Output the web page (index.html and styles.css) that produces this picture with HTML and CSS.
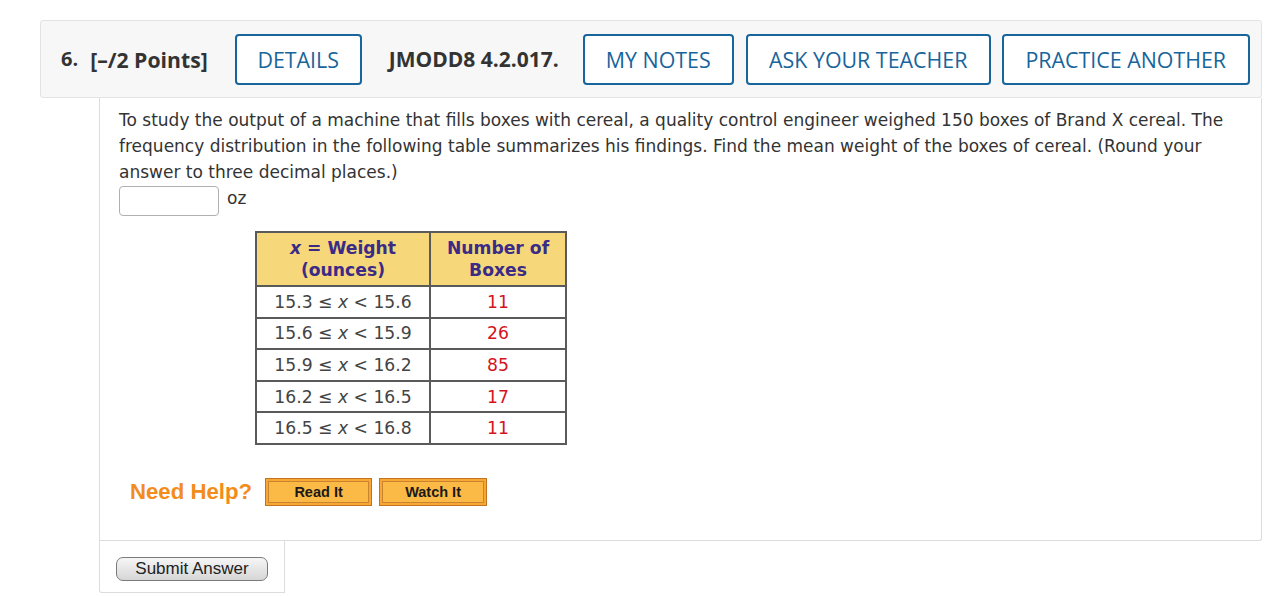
FILE: index.html
```html
<!DOCTYPE html>
<html>
<head>
<meta charset="utf-8">
<link rel="stylesheet" href="styles.css">
</head>
<body>
<div class="question">
  <div class="qhead">
    <span class="qnum">6.</span>
    <span class="qpoints">[–/2 Points]</span>
    <button class="hbtn btn-details">DETAILS</button>
    <span class="qcode">JMODD8 4.2.017.</span>
    <button class="hbtn btn-notes">MY NOTES</button>
    <button class="hbtn btn-ask">ASK YOUR TEACHER</button>
    <button class="hbtn btn-practice">PRACTICE ANOTHER</button>
  </div>
  <div class="qbody">
    <p class="prompt">To study the output of a machine that fills boxes with cereal, a quality control engineer weighed 150 boxes of Brand X cereal. The frequency distribution in the following table summarizes his findings. Find the mean weight of the boxes of cereal. (Round your answer to three decimal places.)</p>
    <div class="answer"><span class="inputbox"></span><span class="unit">oz</span></div>
    <table class="freq">
      <thead>
        <tr><th class="c1"><i>x</i> = Weight<br>(ounces)</th><th class="c2">Number of<br>Boxes</th></tr>
      </thead>
      <tbody>
        <tr><td>15.3 ≤ <i>x</i> &lt; 15.6</td><td class="num">11</td></tr>
        <tr><td>15.6 ≤ <i>x</i> &lt; 15.9</td><td class="num">26</td></tr>
        <tr><td>15.9 ≤ <i>x</i> &lt; 16.2</td><td class="num">85</td></tr>
        <tr><td>16.2 ≤ <i>x</i> &lt; 16.5</td><td class="num">17</td></tr>
        <tr><td>16.5 ≤ <i>x</i> &lt; 16.8</td><td class="num">11</td></tr>
      </tbody>
    </table>
    <div class="help">
      <span class="help-label">Need Help?</span>
      <button class="obtn">Read It</button>
      <button class="obtn">Watch It</button>
    </div>
  </div>
  <div class="submit-wrap">
    <button class="submit">Submit Answer</button>
  </div>
</div>
</body>
</html>
```
FILE: styles.css
```css
html, body {
  margin: 0;
  padding: 0;
  background: #ffffff;
}
.question {
  padding: 20px 22px 0 40px;
}
.qhead {
  display: flex;
  align-items: center;
  height: 76px;
  background: #f7f7f7;
  border: 1px solid #e3e3e3;
  border-radius: 3px;
  padding-left: 20px;
  font-family: "Open Sans", sans-serif;
}
.qnum {
  font-weight: 700;
  font-size: 20px;
  color: #333;
  margin-right: 12px;
  position: relative;
  top: -1px;
}
.qpoints {
  font-weight: 700;
  font-size: 21.2px;
  color: #333;
  margin-right: 27px;
}
.qcode {
  font-weight: 700;
  font-size: 21px;
  color: #333;
  margin: 0 24px 0 27px;
}
.hbtn {
  height: 51px;
  box-sizing: border-box;
  border: 2px solid #17659b;
  border-radius: 4px;
  background: #fff;
  color: #17659b;
  font-family: "Open Sans", sans-serif;
  font-size: 21.4px;
  padding: 0;
  flex: none;
}
.btn-details { width: 127px; }
.btn-notes { width: 151px; margin-right: 12px; }
.btn-ask { width: 245px; margin-right: 11px; }
.btn-practice { width: 248px; }
.qbody {
  margin-left: 59px;
  background: #fff;
  border: 1px solid #dcdcdc;
  border-top: none;
  border-radius: 0 0 3px 0;
  padding: 9px 20px 34px 19px;
  font-family: "DejaVu Sans", Verdana, sans-serif;
  color: #333;
}
.prompt {
  margin: 0;
  font-size: 17px;
  line-height: 26px;
}
.answer {
  display: flex;
  align-items: center;
  margin-top: 0;
  height: 31px;
}
.inputbox {
  display: inline-block;
  width: 98px;
  height: 28px;
  border: 1px solid #b0b0b0;
  border-radius: 4px;
  background: #fff;
}
.unit {
  font-size: 17px;
  margin-left: 8px;
  position: relative;
  top: -3px;
}
.freq {
  margin: 15px 0 0 136px;
  border-collapse: collapse;
  border: 2px solid #555;
  font-size: 17.2px;
}
.freq th, .freq td {
  border: 2px solid #5a5a5a;
  text-align: center;
  padding: 0;
}
.freq th {
  background: #f6d87b;
  color: #3c2b86;
  font-weight: 700;
  height: 52px;
  line-height: 22px;
  vertical-align: middle;
}
.freq th.c1 { width: 172px; }
.freq th.c2 { width: 134px; }
.freq td {
  height: 29.6px;
  line-height: 20px;
  color: #444;
}
.freq td.num {
  color: #d4131b;
}
.help {
  display: flex;
  align-items: center;
  margin: 33px 0 0 11px;
}
.help-label {
  font-family: "Liberation Sans", Arial, sans-serif;
  font-weight: 700;
  font-size: 22.2px;
  color: #f28c1c;
  margin-right: 13px;
}
.obtn {
  width: 107px;
  height: 28px;
  box-sizing: border-box;
  border: 1px solid #c27420;
  background: #fbb945;
  box-shadow: inset 0 0 0 2px #f9a733, inset 0 0 0 3px #c88430;
  font-family: "Liberation Sans", Arial, sans-serif;
  font-weight: 700;
  font-size: 14.5px;
  color: #1a1a1a;
  padding: 0;
  margin-right: 7px;
}
.obtn + .obtn { width: 108px; }
.submit-wrap {
  margin-left: 59px;
  width: 186px;
  height: 52px;
  border: 1px solid #dcdcdc;
  border-top: none;
  border-radius: 0 0 0 3px;
  box-sizing: border-box;
  display: flex;
  align-items: center;
  padding-left: 16px;
}
.submit {
  width: 152px;
  height: 24px;
  border: 1px solid #7a7a7a;
  border-radius: 7px;
  background: linear-gradient(#f6f6f6, #d6d6d6);
  font-family: "Liberation Sans", Arial, sans-serif;
  font-size: 17px;
  color: #222;
  padding: 0;
  margin-top: 5px;
}
```
